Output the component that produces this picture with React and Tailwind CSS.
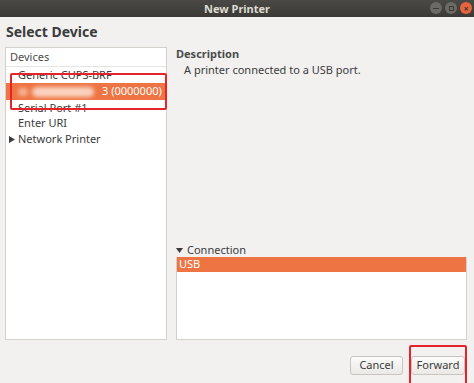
import React from "react";

// Ubuntu "New Printer" dialog, device selection step
const font = "font-['Noto_Sans','DejaVu_Sans',sans-serif]";

function TitleBar() {
  return (
    <div className="relative h-[17px] flex items-center justify-center bg-gradient-to-b from-[#4a4945] to-[#3b3a36]">
      <span className="text-[11px] font-bold text-[#dfdbd2] leading-none">New Printer</span>
      <div className="absolute right-[2px] top-[2px] flex gap-[3px]">
        <span className="w-[12px] h-[12px] rounded-full bg-[#6b6a65] flex items-center justify-center">
          <span className="w-[6px] h-[1px] bg-[#3c3b37]" />
        </span>
        <span className="w-[12px] h-[12px] rounded-full bg-[#6b6a65] flex items-center justify-center">
          <span className="w-[5px] h-[5px] border border-[#3c3b37]" />
        </span>
        <span className="w-[12px] h-[12px] rounded-full bg-[#e9643b] flex items-center justify-center text-[9px] leading-none text-[#3c3b37] font-bold">
          ×
        </span>
      </div>
    </div>
  );
}

function DeviceList() {
  return (
    <div className="relative w-[162px] h-[293px] bg-white border border-[#d4d1cc] text-[11px] text-[#3c3c3c]">
      <div className="h-[19px] pl-[4px] flex items-center border-b border-[#e6e4e1] text-[#4c4c4c]">Devices</div>
      <div className="pt-[0px]">
        <div className="h-[16px] pl-[12px] flex items-center">Generic CUPS-BRF</div>
        <div className="h-[17px] pl-[12px] flex items-center whitespace-nowrap bg-[#ee7543] text-white">
          {/* blurred-out device name */}
          <span className="w-[84px] h-[17px] flex items-center gap-[4px] shrink-0">
            <span className="w-[10px] h-[8px] rounded-full bg-[#f4b597] blur-[2px]" />
            <span className="w-[62px] h-[10px] rounded-full bg-[#f9d3c0] blur-[2px]" />
          </span>
          <span>3 (0000000)</span>
        </div>
        <div className="h-[16px] pl-[12px] flex items-center">Serial Port #1</div>
        <div className="h-[15px] pl-[12px] flex items-center">Enter URI</div>
        <div className="h-[17px] pl-[3px] flex items-center gap-[3px]">
          <svg width="6" height="7" viewBox="0 0 6 7"><path d="M0 0 L6 3.5 L0 7 Z" fill="#3c3c3c" /></svg>
          <span>Network Printer</span>
        </div>
      </div>
      {/* annotation box */}
      <div className="absolute left-[4px] top-[25px] w-[157px] h-[37px] border-2 border-[#e5232a] rounded-[2px] pointer-events-none" />
    </div>
  );
}

function RightPane() {
  return (
    <div className="flex-1 flex flex-col h-[293px] text-[11px] text-[#3c3c3c]">
      <div className="font-bold text-[#4c4c4c] leading-[14px]">Description</div>
      <div className="pl-[8px] pt-[2px] leading-[14px]">A printer connected to a USB port.</div>
      <div className="flex-1" />
      <div className="flex items-center gap-[4px] h-[14px]">
        <svg width="7" height="5" viewBox="0 0 7 5"><path d="M0 0 L7 0 L3.5 5 Z" fill="#3c3c3c" /></svg>
        <span>Connection</span>
      </div>
      <div className="h-[83px] bg-white border border-[#d4d1cc] border-t-0">
        <div className="h-[15px] pl-[2px] flex items-center bg-[#ee7543] text-white">USB</div>
      </div>
    </div>
  );
}

export default function App() {
  return (
    <div className={`w-[474px] h-[383px] bg-[#f2f1f0] overflow-hidden flex flex-col ${font}`}>
      <TitleBar />
      <div className="px-[6px] pt-[6px] h-[23px] text-[14px] font-bold text-[#3c3c3c] leading-[18px]">Select Device</div>
      <div className="flex gap-[9px] pl-[5px] pr-[7px] mt-[7px]">
        <DeviceList />
        <RightPane />
      </div>
      <div className="relative flex justify-end gap-[8px] pr-[9px] pt-[16px]">
        <button className="w-[53px] h-[19px] rounded-[3px] border border-[#c8c5c0] bg-gradient-to-b from-[#fbfbfa] to-[#ebe9e6] text-[11px] text-[#3c3c3c]">
          Cancel
        </button>
        <button className="w-[54px] h-[19px] rounded-[3px] border border-[#c8c5c0] bg-gradient-to-b from-[#fbfbfa] to-[#ebe9e6] text-[11px] text-[#3c3c3c]">
          Forward
        </button>
        <div className="absolute right-[7px] top-[5px] w-[58px] h-[40px] border-2 border-[#e5232a] rounded-[2px] pointer-events-none" />
      </div>
    </div>
  );
}
